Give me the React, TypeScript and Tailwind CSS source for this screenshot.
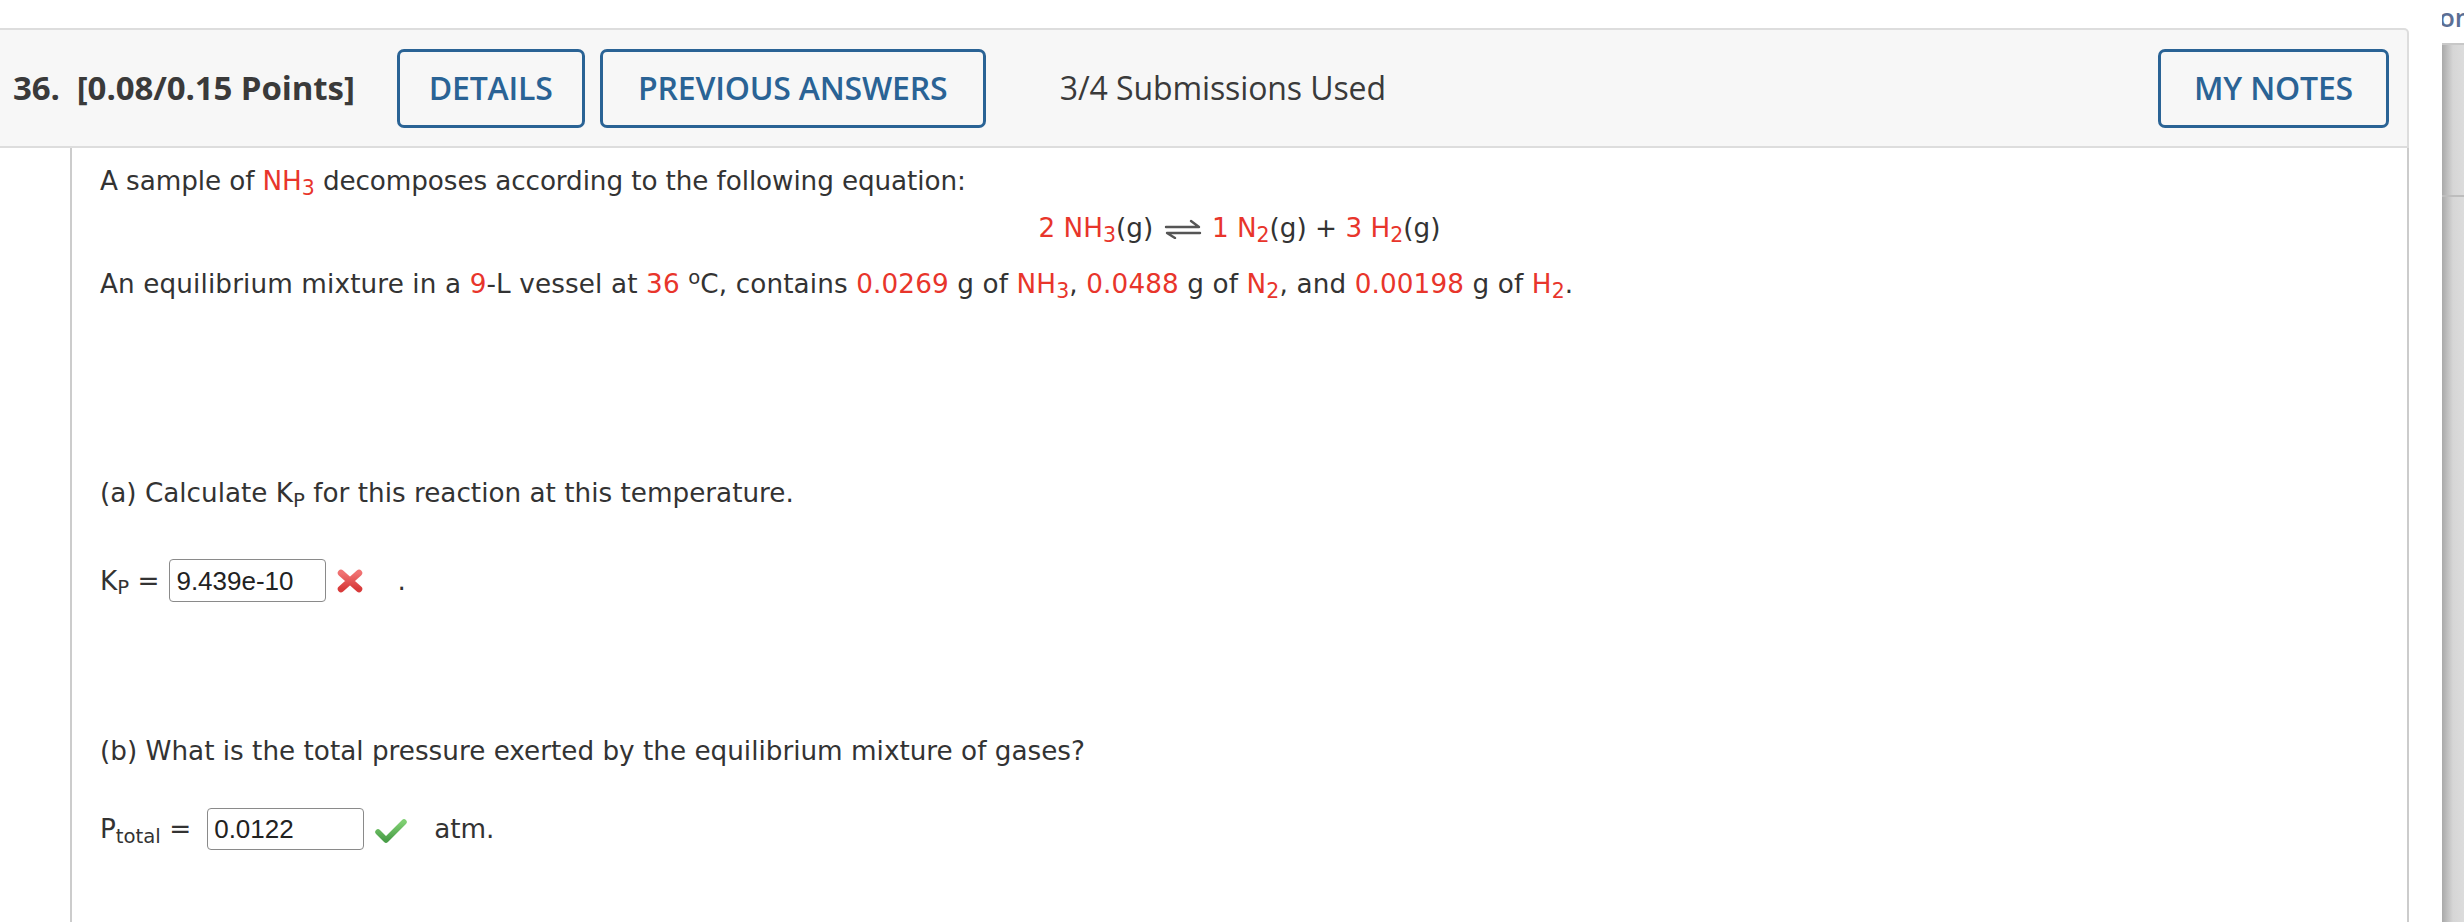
import React from "react";

const R = ({ children }: { children: React.ReactNode }) => (
  <span className="text-[#e8352b]">{children}</span>
);

const Sub = ({ children }: { children: React.ReactNode }) => (
  <sub className="text-[0.78em]">{children}</sub>
);

function EqArrow() {
  return (
    <svg width="38" height="20" viewBox="0 0 38 20" className="inline-block align-[-2px] mx-[2px]">
      <path d="M2 8 H35 L27 2" fill="none" stroke="#555" strokeWidth="2.4" strokeLinejoin="round" strokeLinecap="round" />
      <path d="M36 14 H3 L11 19" fill="none" stroke="#555" strokeWidth="2.4" strokeLinejoin="round" strokeLinecap="round" />
    </svg>
  );
}

function RedX() {
  return (
    <svg width="28" height="26" viewBox="0 0 28 26">
      <defs>
        <linearGradient id="rx" x1="0" y1="0" x2="0" y2="1">
          <stop offset="0" stopColor="#f07272" />
          <stop offset="1" stopColor="#d83a3a" />
        </linearGradient>
      </defs>
      <path d="M5 5 L23 21 M23 5 L5 21" fill="none" stroke="url(#rx)" strokeWidth="6.5" strokeLinecap="round" />
    </svg>
  );
}

function GreenCheck() {
  return (
    <svg width="32" height="24" viewBox="0 0 32 24">
      <defs>
        <linearGradient id="gc" x1="0" y1="0" x2="0" y2="1">
          <stop offset="0" stopColor="#7fcf72" />
          <stop offset="1" stopColor="#4a9e48" />
        </linearGradient>
      </defs>
      <path d="M3 13 L11 21 L29 3" fill="none" stroke="url(#gc)" strokeWidth="5.5" strokeLinecap="round" strokeLinejoin="round" />
    </svg>
  );
}

export default function App() {
  const btn =
    "h-[79px] border-[3px] border-[#2a6395] rounded-[7px] flex items-center justify-center text-[#2a6395] font-semibold text-[32px] tracking-[-0.2px]";
  return (
    <div className="w-[2464px] h-[922px] bg-white flex overflow-hidden" style={{ fontFamily: '"Open Sans", "Noto Sans", sans-serif' }}>
      {/* main column */}
      <div className="w-[2409px] h-full flex flex-col pt-[28px]">
        {/* header */}
        <div className="h-[120px] bg-[#f7f7f7] border-t-2 border-b-2 border-r-2 border-[#dddddd] rounded-tr-[5px] flex items-center pl-[13px] pr-[18px]">
          <div className="text-[33px] font-bold text-[#3a3a3a] whitespace-pre tracking-[-0.1px]">36.  [0.08/0.15 Points]</div>
          <div className={btn + " ml-[42px] w-[188px]"}>DETAILS</div>
          <div className={btn + " ml-[15px] w-[386px]"}>PREVIOUS ANSWERS</div>
          <div className="ml-[74px] text-[32px] text-[#3a3a3a] tracking-[-0.1px]">3/4 Submissions Used</div>
          <div className="flex-1" />
          <div className={btn + " w-[231px]"}>MY NOTES</div>
        </div>
        {/* content */}
        <div
          className="flex-1 ml-[70px] border-l-2 border-r-2 border-[#cccccc] pl-[28px] text-[26.25px] leading-[32px] text-[#333333]"
          style={{ fontFamily: '"DejaVu Sans", Verdana, sans-serif' }}
        >
          <div className="mt-[17px] tracking-[-0.1px]">
            A sample of <R>NH<Sub>3</Sub></R> decomposes according to the following equation:
          </div>
          <div className="mt-[15px] text-center pr-[28px]">
            <R>2 NH<Sub>3</Sub></R>(g) <EqArrow /> <R>1 N<Sub>2</Sub></R>(g) + <R>3 H<Sub>2</Sub></R>(g)
          </div>
          <div className="mt-[24px] tracking-[0.12px]">
            An equilibrium mixture in a <R>9</R>-L vessel at <R>36</R> <sup className="text-[0.75em] top-[-0.45em]">o</sup>C, contains{" "}
            <R>0.0269</R> g of <R>NH<Sub>3</Sub></R>, <R>0.0488</R> g of <R>N<Sub>2</Sub></R>, and <R>0.00198</R> g of{" "}
            <R>H<Sub>2</Sub></R>.
          </div>
          <div className="mt-[177px]">
            (a) Calculate K<sub className="text-[0.75em]">P</sub> for this reaction at this temperature.
          </div>
          <div className="mt-[50px] h-[43px] flex items-center">
            <span className="whitespace-pre">
              K<sub className="text-[0.75em]">P</sub> = 
            </span>
            <div
              className="ml-[10px] h-[43px] w-[157px] border border-[#8a8a8a] rounded-[4px] px-[6px] flex items-center text-[26px] text-[#222222]"
              style={{ fontFamily: '"Liberation Sans", Arial, sans-serif' }}
            >
              9.439e-10
            </div>
            <div className="ml-[10px] flex items-center">
              <RedX />
            </div>
            <span className="ml-[33px]">.</span>
          </div>
          <div className="mt-[133px]">
            (b) What is the total pressure exerted by the equilibrium mixture of gases?
          </div>
          <div className="mt-[41px] h-[42px] flex items-center">
            <span className="whitespace-pre">
              P<sub className="text-[0.75em]">total</sub> = 
            </span>
            <div
              className="ml-[16px] h-[42px] w-[157px] border border-[#8a8a8a] rounded-[4px] px-[6px] flex items-center text-[26px] text-[#222222]"
              style={{ fontFamily: '"Liberation Sans", Arial, sans-serif' }}
            >
              0.0122
            </div>
            <div className="ml-[11px] flex items-center pt-[4px]">
              <GreenCheck />
            </div>
            <span className="ml-[27px]">atm.</span>
          </div>
        </div>
      </div>
      {/* gap */}
      <div className="w-[33px]" />
      {/* right sidebar sliver */}
      <div className="w-[22px] h-full flex flex-col overflow-hidden">
        <div className="h-[45px] bg-white border-b-2 border-[#c8c8c8] overflow-hidden">
          <div className="-ml-[3px] mt-[2px] text-[26px] leading-[30px] font-semibold text-[#5b6f95] whitespace-nowrap">on</div>
        </div>
        <div className="h-[152px] bg-gradient-to-r from-[#a9a9a9] via-[#d6d6d6] to-[#dcdcdc] border-b-2 border-[#bdbdbd]" />
        <div className="flex-1 bg-gradient-to-r from-[#a9a9a9] via-[#d6d6d6] to-[#dcdcdc]" />
      </div>
    </div>
  );
}
